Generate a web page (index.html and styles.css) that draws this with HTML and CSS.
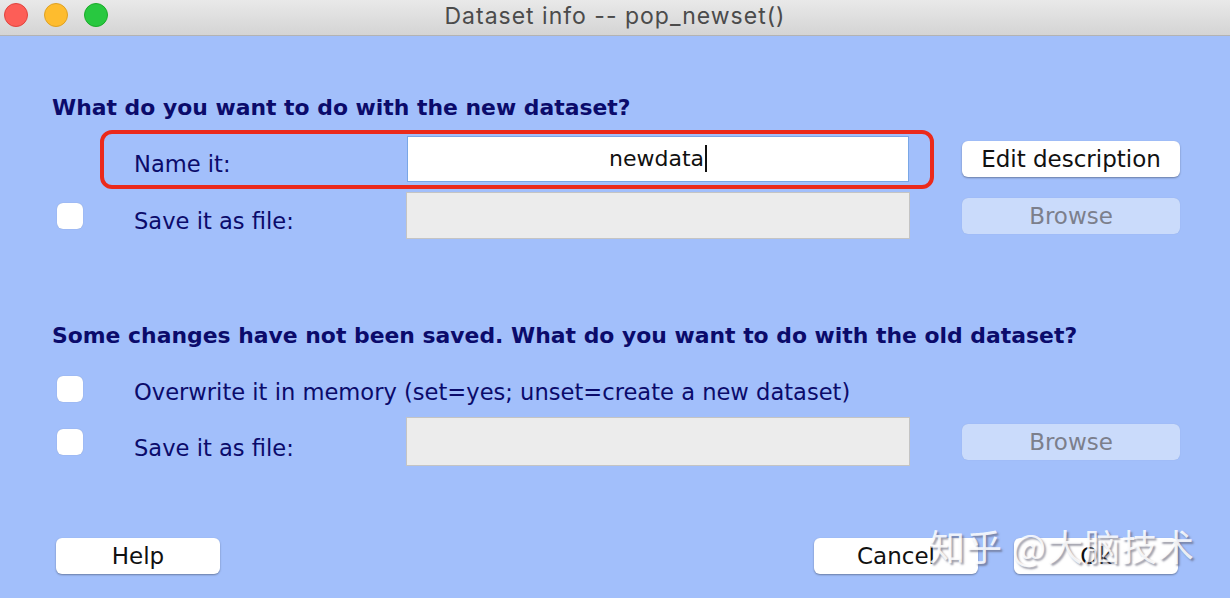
FILE: index.html
```html
<!DOCTYPE html>
<html lang="en">
<head>
    <meta charset="UTF-8">
    <title>Dataset info -- pop_newset()</title>
    <link rel="stylesheet" href="styles.css">
</head>
<body>
    <div class="window">
        <div class="titlebar">
            <div class="lights">
                <span class="light red"></span>
                <span class="light yellow"></span>
                <span class="light green"></span>
            </div>
            <div class="title">Dataset info -- pop_newset()</div>
        </div>

        <div class="dialog">
            <h2 class="heading first">What do you want to do with the new dataset?</h2>

            <div class="row row-name">
                <span></span>
                <label class="label">Name it:</label>
                <div class="field active">newdata<span class="caret"></span></div>
                <button class="btn">Edit description</button>
                <div class="mark"></div>
            </div>

            <div class="row row-file">
                <span class="check"></span>
                <label class="label">Save it as file:</label>
                <div class="field disabled"></div>
                <button class="btn off">Browse</button>
            </div>

            <h2 class="heading second">Some changes have not been saved. What do you want to do with the old dataset?</h2>

            <div class="row row-over">
                <span class="check"></span>
                <label class="label wide">Overwrite it in memory (set=yes; unset=create a new dataset)</label>
            </div>

            <div class="row row-file2">
                <span class="check"></span>
                <label class="label">Save it as file:</label>
                <div class="field disabled"></div>
                <button class="btn off">Browse</button>
            </div>

            <div class="footer">
                <button class="btn small">Help</button>
                <div class="right">
                    <button class="btn small">Cancel</button>
                    <button class="btn small">Ok</button>
                </div>
            </div>
        </div>

        <div class="watermark">知乎 @大脑技术</div>
    </div>
</body>
</html>
```

FILE: styles.css
```css
body {
    margin: 0;
    padding: 0;
    background-color: #a2bffb;
    font-family: "DejaVu Sans", sans-serif;
}
.window {
    position: relative;
    width: 1230px;
    height: 598px;
    overflow: hidden;
}
.titlebar {
    position: relative;
    height: 35px;
    background: linear-gradient(#e9e9e9, #d4d4d4);
    border-bottom: 1px solid #b3b3b3;
}
.lights {
    display: flex;
    gap: 16px;
    padding: 3px 0 0 4px;
}
.light {
    width: 24px;
    height: 24px;
    border-radius: 50%;
    box-sizing: border-box;
}
.light.red {
    background-color: #fd5e57;
    border: 1px solid #e0443e;
}
.light.yellow {
    background-color: #febc2e;
    border: 1px solid #dea123;
}
.light.green {
    background-color: #28c840;
    border: 1px solid #1aab29;
}
.title {
    position: absolute;
    top: 0;
    left: 0;
    right: 0;
    text-align: center;
    line-height: 33px;
    font-family: "Inter", "Liberation Sans", sans-serif;
    font-size: 23px;
    letter-spacing: 1px;
    color: #4b4b4b;
}
.dialog {
    padding: 0 0 0 52px;
}
.heading {
    margin: 0;
    font-size: 21.9px;
    line-height: 26px;
    font-weight: bold;
    color: #0b0b6b;
}
.heading.first {
    margin-top: 59px;
}
.heading.second {
    margin-top: 84px;
}
.row {
    position: relative;
    display: grid;
    grid-template-columns: 82px 272px 504px 218px;
    column-gap: 0;
    align-items: center;
}
.row > .btn {
    margin-left: 52px;
}
.row-name {
    margin-top: 15px;
    height: 46px;
}
.row-file {
    margin-top: 10px;
    height: 47px;
}
.row-over {
    margin-top: 24px;
    height: 30px;
}
.row-file2 {
    margin-top: 14px;
    height: 49px;
}
.label {
    padding-top: 9px;
    font-size: 22.6px;
    color: #0b0b6b;
}
.row-file .label {
    padding-top: 11px;
}
.row-file2 .label {
    padding-top: 13px;
}
.label.wide {
    grid-column: 2 / 5;
    white-space: nowrap;
    padding-top: 6px;
}
.check {
    width: 26px;
    height: 26px;
    margin-left: 5px;
    background-color: #fff;
    border-radius: 6px;
    box-shadow: 0 0 1px rgba(0, 0, 0, 0.25);
}
.field {
    box-sizing: border-box;
    height: 100%;
    border: 1px solid #c4c4c4;
    background-color: #ececec;
}
.field.active {
    width: 502px;
    height: 46px;
    margin-left: 1px;
    border: 1px solid #7aa7e6;
    background-color: #fff;
    text-align: center;
    line-height: 44px;
    font-size: 22px;
    color: #111;
}
.caret {
    display: inline-block;
    width: 2px;
    height: 27px;
    margin-left: 1px;
    vertical-align: -6px;
    background-color: #111;
}
.btn {
    box-sizing: border-box;
    width: 218px;
    height: 36px;
    padding: 0;
    border: none;
    border-radius: 6px;
    background-color: #fff;
    box-shadow: 0 1px 2px rgba(0, 0, 0, 0.35);
    font-family: "DejaVu Sans", sans-serif;
    font-size: 23px;
    color: #111;
}
.btn.off {
    background-color: #cadbfb;
    box-shadow: 0 0 1px rgba(0, 0, 0, 0.15);
    color: #7c7f8c;
}
.mark {
    position: absolute;
    left: 48px;
    top: -6px;
    width: 834px;
    height: 59px;
    box-sizing: border-box;
    border: 4px solid #eb2a1b;
    border-radius: 12px;
    pointer-events: none;
}
.footer {
    display: flex;
    justify-content: space-between;
    margin-top: 72px;
    padding-left: 4px;
    width: 1122px;
}
.footer .right {
    display: flex;
    gap: 36px;
}
.btn.small {
    width: 164px;
}
.watermark {
    position: absolute;
    left: 929px;
    top: 519px;
    font-family: "Noto Sans CJK SC", sans-serif;
    font-size: 36px;
    letter-spacing: 1px;
    color: rgba(255, 255, 255, 0.85);
    text-shadow: 2px 2px 2px rgba(90, 90, 110, 0.6);
    white-space: nowrap;
}
```
